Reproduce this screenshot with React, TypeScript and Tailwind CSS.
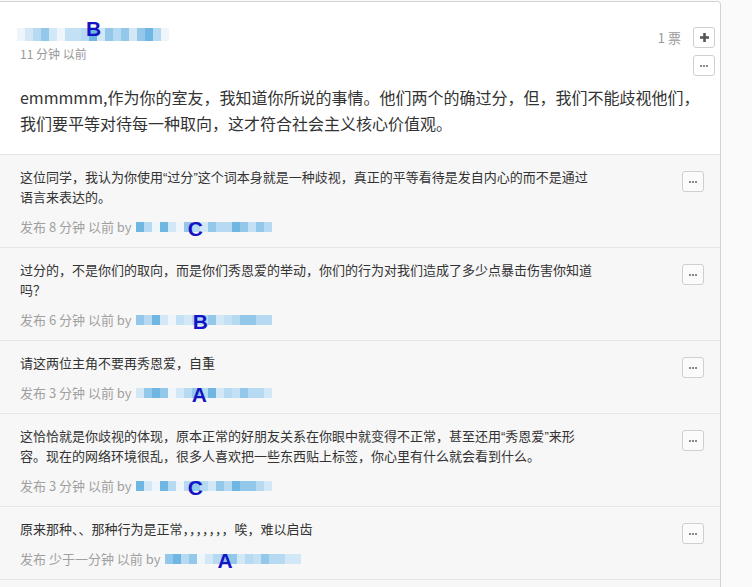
import React from 'react';

const SHADES = [
  'bg-[#eef6fc]',
  'bg-[#d3e8f7]',
  'bg-[#b5daf2]',
  'bg-[#93c8eb]',
  'bg-[#6fb6e3]',
  'bg-[#c4e0f4]',
];

type Comment = {
  lines: string[];
  time: string;
  letter: string;
  cells: number[];
  letterPos: string;
};

const comments: Comment[] = [
  {
    lines: [
      '这位同学，我认为你使用“过分”这个词本身就是一种歧视，真正的平等看待是发自内心的而不是通过',
      '语言来表达的。',
    ],
    time: '发布 8 分钟 以前 by',
    letter: 'C',
    cells: [4, 2, 0, 4, 1, 0, 3, 2, 1, 3, 2, 2, 4, 3, 5, 3, 2],
    letterPos: 'left-[52px]',
  },
  {
    lines: [
      '过分的，不是你们的取向，而是你们秀恩爱的举动，你们的行为对我们造成了多少点暴击伤害你知道',
      '吗？',
    ],
    time: '发布 6 分钟 以前 by',
    letter: 'B',
    cells: [3, 2, 4, 1, 0, 5, 1, 2, 2, 3, 1, 5, 2, 3, 3, 2, 2],
    letterPos: 'left-[57px]',
  },
  {
    lines: ['请这两位主角不要再秀恩爱，自重'],
    time: '发布 3 分钟 以前 by',
    letter: 'A',
    cells: [1, 3, 4, 3, 0, 1, 2, 3, 2, 4, 1, 2, 5, 3, 2, 2, 1],
    letterPos: 'left-[56px]',
  },
  {
    lines: [
      '这恰恰就是你歧视的体现，原本正常的好朋友关系在你眼中就变得不正常，甚至还用“秀恩爱”来形',
      '容。现在的网络环境很乱，很多人喜欢把一些东西贴上标签，你心里有什么就会看到什么。',
    ],
    time: '发布 3 分钟 以前 by',
    letter: 'C',
    cells: [4, 1, 0, 4, 2, 0, 2, 3, 2, 1, 3, 2, 4, 3, 3, 2, 1],
    letterPos: 'left-[52px]',
  },
  {
    lines: ['原来那种、、那种行为是正常，，，，，，，唉，难以启齿'],
    time: '发布 少于一分钟 以前 by',
    letter: 'A',
    cells: [3, 4, 2, 3, 0, 1, 2, 3, 3, 1, 2, 5, 3, 2, 2, 1, 1],
    letterPos: 'left-[53px]',
  },
];

// curly quotes render narrow in the original, so give them a latin face
function withQuotes(text: string) {
  const parts = text.split(/([“”])/);
  return parts.map((p, i) =>
    p === '“' || p === '”' ? (
      <span key={i} className="font-['Liberation_Sans',sans-serif] leading-none">
        {p}
      </span>
    ) : (
      <React.Fragment key={i}>{p}</React.Fragment>
    )
  );
}

function Mosaic({ cells, letter, letterPos, tall }: { cells: number[]; letter: string; letterPos: string; tall?: boolean }) {
  return (
    <div className="relative flex">
      <div className={`flex ${tall ? 'h-[13px]' : 'h-[10px]'}`}>
        {cells.map((c, i) => (
          <div key={i} className={`w-[8px] h-full ${SHADES[c]}`} />
        ))}
      </div>
      <span
        className={`absolute ${letterPos} font-['Liberation_Sans',sans-serif] font-bold text-[21px] leading-none text-[#1414c4]`}
      >
        {letter}
      </span>
    </div>
  );
}

function SmallButton({ children, light }: { children: React.ReactNode; light?: boolean }) {
  return (
    <button
      className={`w-[22px] h-[21px] flex items-center justify-center border border-[#cfcfcf] rounded-[3px] ${light ? 'bg-[#fbfbfb]' : 'bg-white'}`}
    >
      {children}
    </button>
  );
}

function Dots() {
  return (
    <span className="flex gap-[1px]">
      <span className="w-[2px] h-[2px] bg-[#8a8a8a]" />
      <span className="w-[2px] h-[2px] bg-[#8a8a8a]" />
      <span className="w-[2px] h-[2px] bg-[#8a8a8a]" />
    </span>
  );
}

export default function App() {
  return (
    <div className="h-[587px] overflow-hidden bg-[#fafafa] font-['Noto_Sans_CJK_SC',sans-serif]">
      <div className="mt-[1px] w-[721px] border-t border-r border-[#d3d3d3] rounded-tr-[4px] overflow-hidden">
        {/* Question */}
        <div className="bg-white border-b border-[#e4e4e4] pl-[20px] pr-[5px] pt-[25px] pb-[18px]">
          <div className="flex justify-between items-start">
            <div className="flex flex-col items-start">
              <div className="-ml-[3px] mt-[1px]">
                <Mosaic
                  cells={[0, 1, 2, 3, 1, 0, 5, 5, 2, 4, 1, 3, 2, 3, 1, 3, 4, 2, 0]}
                  letter="B"
                  letterPos="left-[69px] -top-[10px]"
                  tall
                />
              </div>
              <span className="mt-[5px] text-[12px] leading-[16px] text-[#999]">11 分钟 以前</span>
            </div>
            <div className="flex flex-col items-end gap-[7px]">
              <div className="flex items-center gap-[12px]">
                <span className="text-[13px] text-[#999]">1 票</span>
                <SmallButton>
                  <svg width="11" height="11" viewBox="0 0 11 11">
                    <path d="M5.5 1v9M1 5.5h9" stroke="#555" strokeWidth="2.6" />
                  </svg>
                </SmallButton>
              </div>
              <SmallButton>
                <Dots />
              </SmallButton>
            </div>
          </div>
          <p className="mt-[8px] text-[16px] leading-[26px] text-[#333]">
            emmmmm,作为你的室友，我知道你所说的事情。他们两个的确过分，但，我们不能歧视他们，
            <br />
            我们要平等对待每一种取向，这才符合社会主义核心价值观。
          </p>
        </div>

        {/* Comments */}
        <div className="bg-[#f7f7f7]">
          {comments.map((c, i) => (
            <div key={i} className="flex justify-between border-b border-[#e6e6e6] pl-[20px] pr-[16px] pt-[12px] pb-[10px]">
              <div className="flex flex-col">
                <p className="text-[13px] leading-[20px] text-[#333]">
                  {c.lines.map((l, j) => (
                    <React.Fragment key={j}>
                      {j > 0 && <br />}
                      {withQuotes(l)}
                    </React.Fragment>
                  ))}
                </p>
                <div className="mt-[10px] flex items-center h-[20px] text-[13px] text-[#a0a0a0]">
                  <span className="mr-[4px]">{c.time}</span>
                  <Mosaic cells={c.cells} letter={c.letter} letterPos={`${c.letterPos} -top-[4px]`} />
                </div>
              </div>
              <div className="mt-[4px]">
                <SmallButton light>
                  <Dots />
                </SmallButton>
              </div>
            </div>
          ))}
          <div className="h-[20px]" />
        </div>
      </div>
    </div>
  );
}
